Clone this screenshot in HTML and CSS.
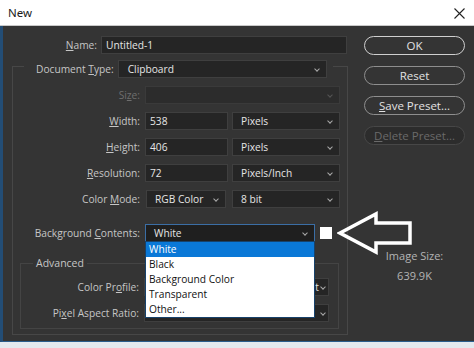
FILE: index.html
```html
<!doctype html>
<html lang="en">
<head>
    <meta charset="UTF-8">
    <title>New</title>
    <link rel="stylesheet" href="styles.css">
</head>
<body>
<div class="titlebar">
    <span class="title">New</span>
    <svg class="close" width="11" height="11" viewBox="0 0 11 11"><path d="M0.5 0.5 L10.5 10.5 M10.5 0.5 L0.5 10.5" stroke="#222" stroke-width="1.1"/></svg>
</div>
<div class="dialog">
    <div class="form">
        <div class="row row-name">
            <label class="lbl lbl-name"><u>N</u>ame:</label>
            <div class="field field-name">Untitled-1</div>
        </div>

        <div class="group">
            <div class="group-head">
                <label class="lbl-head">Document <u>T</u>ype:</label>
                <div class="field select sel-doctype">Clipboard<i class="chev"></i></div>
            </div>

            <div class="row">
                <label class="lbl disabled">Si<u>z</u>e:</label>
                <div class="field select sel-size off"><i class="chev"></i></div>
            </div>
            <div class="row">
                <label class="lbl"><u>W</u>idth:</label>
                <div class="field num">538</div>
                <div class="field select unit">Pixels<i class="chev"></i></div>
            </div>
            <div class="row">
                <label class="lbl"><u>H</u>eight:</label>
                <div class="field num">406</div>
                <div class="field select unit">Pixels<i class="chev"></i></div>
            </div>
            <div class="row">
                <label class="lbl"><u>R</u>esolution:</label>
                <div class="field num">72</div>
                <div class="field select unit">Pixels/Inch<i class="chev"></i></div>
            </div>
            <div class="row">
                <label class="lbl">Color <u>M</u>ode:</label>
                <div class="field select sel-mode">RGB Color<i class="chev"></i></div>
                <div class="field select unit">8 bit<i class="chev"></i></div>
            </div>

            <div class="row row-bg">
                <label class="lbl">Background <u>C</u>ontents:</label>
                <div class="field select sel-bg focus">White<i class="chev"></i></div>
                <span class="swatch"></span>

                <ul class="dropdown">
                    <li class="active">White</li>
                    <li>Black</li>
                    <li>Background Color</li>
                    <li>Transparent</li>
                    <li>Other...</li>
                </ul>

                <svg class="arrow" width="80" height="46" viewBox="0 0 80 46">
                    <path d="M3 22 L39 3 L39 12 L73 12 L73 32 L39 32 L39 41 Z" fill="none" stroke="#fff" stroke-width="3.5" stroke-linejoin="miter"/>
                </svg>
            </div>

            <div class="group group-adv">
                <div class="adv-head">Advanced</div>
                <div class="row">
                    <label class="lbl lbl-adv">Color Pr<u>o</u>file:</label>
                    <div class="field select sel-adv">t<i class="chev"></i></div>
                </div>
                <div class="row">
                    <label class="lbl lbl-adv">Pi<u>x</u>el Aspect Ratio:</label>
                    <div class="field select sel-adv"><i class="chev"></i></div>
                </div>
            </div>
        </div>
    </div>

    <div class="side">
        <div class="btn btn-default">OK</div>
        <div class="btn">Reset</div>
        <div class="btn"><u>S</u>ave Preset...</div>
        <div class="btn off"><u>D</u>elete Preset...</div>

        <div class="imgsize">
            <div>Image Size:</div>
            <div>639.9K</div>
        </div>
    </div>
</div>
</body>
</html>
```

FILE: styles.css
```css
body {
    margin: 0;
    background: #e4e9ee;
    font-family: "Open Sans", "Noto Sans", sans-serif;
    font-size: 10.2px;
    width: 474px;
    height: 348px;
    overflow: hidden;
}

u {
    text-decoration: underline;
    text-underline-offset: 1px;
}

.titlebar {
    height: 26px;
    background: #fff;
    display: flex;
    align-items: center;
    justify-content: space-between;
    padding: 0 9px 0 8px;
    border-bottom: 1px solid #c9c9c9;
    box-sizing: border-box;
}

.title {
    color: #1a1a1a;
    font-size: 11.5px;
    font-family: "Noto Sans", sans-serif;
}

.close {
    margin-top: 1px;
}

.dialog {
    display: flex;
    height: 316px;
    box-sizing: border-box;
    padding: 10px 0 0 9px;
    background: #343434;
    border-left: 3px solid #234d75;
    border-bottom: 1px solid #2b5d8c;
}

.form {
    width: 336px;
}

.row {
    display: flex;
    align-items: center;
    height: 18px;
    margin-top: 8px;
}

.row-name {
    margin-top: 0;
}

.lbl {
    width: 127px;
    padding-right: 5px;
    text-align: right;
    color: #c6c6c6;
    white-space: nowrap;
    box-sizing: content-box;
}

.lbl-name {
    width: 85px;
    padding-right: 4px;
}

.lbl.disabled {
    color: #6e6e6e;
}

.field {
    height: 18px;
    line-height: 17px;
    box-sizing: border-box;
    background: #252525;
    border: 1px solid #3f3f3f;
    color: #e6e6e6;
    padding-left: 4px;
    white-space: nowrap;
    overflow: hidden;
    position: relative;
}

.field-name {
    width: 246px;
}

.select {
    padding-left: 8px;
}

.chev {
    position: absolute;
    right: 7px;
    top: 6px;
    width: 3px;
    height: 3px;
    border-right: 1px solid #a9a9a9;
    border-bottom: 1px solid #a9a9a9;
    transform: rotate(45deg);
}

.off {
    background: #2c2c2c;
    border-color: #3a3a3a;
}

.off .chev {
    border-color: #555;
}

.num {
    width: 83px;
    margin-right: 4px;
}

.unit {
    width: 108px;
}

.sel-size {
    width: 195px;
}

.sel-mode {
    width: 80px;
    margin-right: 6px;
    margin-left: 1px;
}

/* group boxes */
.group {
    margin-top: 12px;
    border: 1px solid #474747;
    padding-bottom: 5px;
}

.group-head {
    display: flex;
    align-items: center;
    width: fit-content;
    margin: -7px 0 0 11px;
    padding: 0 6px 0 12px;
    background: #343434;
}

.lbl-head {
    color: #c6c6c6;
    margin-right: 4px;
}

.sel-doctype {
    width: 209px;
    padding-left: 9px;
}

.row-bg {
    position: relative;
    margin-top: 16px;
}

.sel-bg {
    width: 170px;
}

.focus {
    border-color: #3b6ea5;
    background: #1f1f1f;
}

.swatch {
    width: 12px;
    height: 12px;
    margin-left: 5px;
    background: #fff;
}

.dropdown {
    position: absolute;
    left: 132px;
    top: 17px;
    z-index: 5;
    width: 170px;
    margin: 0;
    padding: 0;
    list-style: none;
    background: #fff;
    border: 1px solid #17426b;
    box-sizing: border-box;
}

.dropdown li {
    height: 15px;
    line-height: 15px;
    padding-left: 3px;
    color: #111;
    font-size: 10.2px;
}

.dropdown li.active {
    background: #0a78d7;
    color: #fff;
}

.arrow {
    position: absolute;
    left: 324px;
    top: -13px;
    z-index: 6;
}

.group-adv {
    margin: 21px 8px 0 7px;
    padding-bottom: 6px;
    border-color: #444;
}

.adv-head {
    width: fit-content;
    margin: -8px 0 0 12px;
    padding: 0 3px;
    height: 14px;
    line-height: 14px;
    background: #343434;
    color: #c6c6c6;
    font-size: 10.5px;
}

.group-adv .row:first-of-type {
    margin-top: 4px;
}

.lbl-adv {
    width: 118px;
}

.sel-adv {
    width: 185px;
    text-align: right;
    padding-right: 9px;
}

.sel-adv .chev {
    right: 3px;
}

/* right column */
.side {
    width: 101px;
    margin-left: 16px;
}

.btn {
    height: 19px;
    line-height: 17px;
    box-sizing: border-box;
    border: 1.5px solid #8e8e8e;
    border-radius: 10px;
    text-align: center;
    color: #e2e2e2;
    margin-bottom: 11px;
    font-size: 11.5px;
}

.btn-default {
    border-color: #cfcfcf;
}

.btn.off {
    border-color: #474747;
    color: #6a6a6a;
}

.imgsize {
    margin-top: 101px;
    text-align: center;
    color: #b4b4b4;
    line-height: 20px;
    font-size: 11px;
}
```
